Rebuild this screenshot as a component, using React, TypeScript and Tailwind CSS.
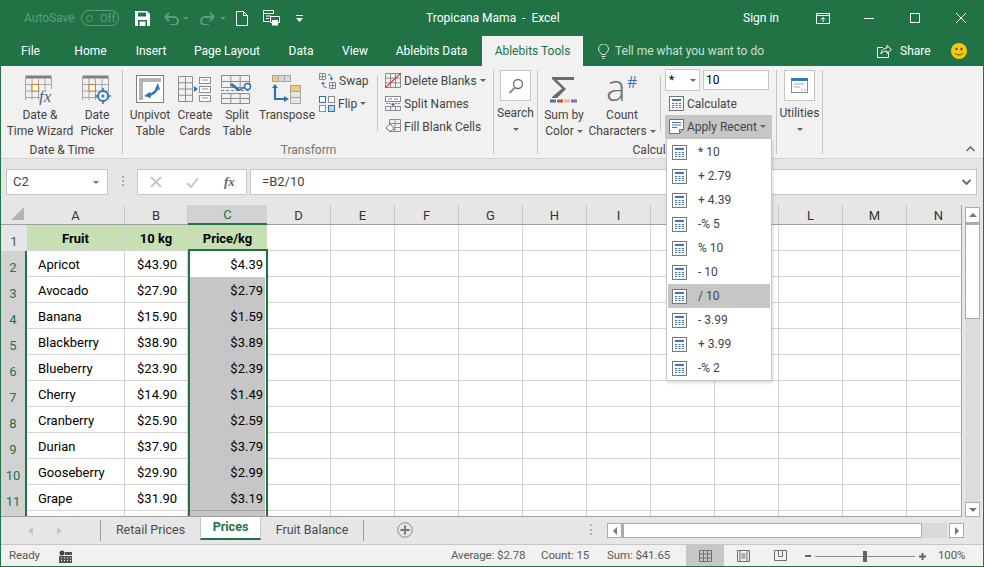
import type { ReactNode } from "react";

const fruits = [
  ["Apricot", "$43.90", "$4.39"],
  ["Avocado", "$27.90", "$2.79"],
  ["Banana", "$15.90", "$1.59"],
  ["Blackberry", "$38.90", "$3.89"],
  ["Blueberry", "$23.90", "$2.39"],
  ["Cherry", "$14.90", "$1.49"],
  ["Cranberry", "$25.90", "$2.59"],
  ["Durian", "$37.90", "$3.79"],
  ["Gooseberry", "$29.90", "$2.99"],
  ["Grape", "$31.90", "$3.19"],
];

const columns = ["D", "E", "F", "G", "H", "I", "J", "K", "L", "M", "N"];
const recent = ["* 10", "+ 2.79", "+ 4.39", "-% 5", "% 10", "- 10", "/ 10", "- 3.99", "+ 3.99", "-% 2"];

const Caret = ({ color = "#666666" }: { color?: string }) => (
  <svg width="6" height="3" viewBox="0 0 6 3" className="inline-block shrink-0">
    <path d="M0 0h6L3 3z" fill={color} />
  </svg>
);

const CalcIcon = () => (
  <svg width="15" height="15" viewBox="0 0 15 15" className="shrink-0">
    <rect x="0.5" y="0.5" width="14" height="14" fill="#fff" stroke="#767676" />
    <rect x="3" y="3" width="9" height="2" fill="#3f74b5" />
    <path d="M3 7h2v1H3zM6.5 7h2v1h-2zM10 7h2v1h-2zM3 9h2v1H3zM6.5 9h2v1h-2zM10 9h2v1h-2zM3 11h2v1H3zM6.5 11h2v1h-2zM10 11h2v1h-2z" fill="#3f74b5" />
  </svg>
);

const CalendarBase = ({ children }: { children: ReactNode }) => (
  <svg width="30" height="30" viewBox="0 0 30 30" className="shrink-0">
    <rect x="0.5" y="0.5" width="26" height="3" fill="#7f7f7f" />
    <path d="M0.5 3v22M7 3v22M13.5 3v22M20 3v22M26.5 3v22M0.5 9.5h26M0.5 16h26M0.5 22.5h26" stroke="#a6a6a6" fill="none" />
    <rect x="7" y="9.5" width="6.5" height="6.5" fill="#fff" stroke="#d67a1e" />
    {children}
  </svg>
);

const TableLines = ({ x, y, w, h, cols, rows }: { x: number; y: number; w: number; h: number; cols: number; rows: number }) => {
  const parts: string[] = [];
  for (let i = 0; i <= cols; i++) parts.push(`M${x + (i * w) / cols} ${y}v${h}`);
  for (let i = 0; i <= rows; i++) parts.push(`M${x} ${y + (i * h) / rows}h${w}`);
  return <path d={parts.join("")} stroke="#8c8c8c" fill="none" />;
};

const UnpivotIcon = () => (
  <svg width="29" height="29" viewBox="0 0 29 29" className="shrink-0">
    <rect x="0.5" y="0.5" width="27" height="27" fill="#fff" stroke="#7f7f7f" />
    <path d="M3 3h22v4H7v18H3z" fill="#b3b3b3" />
    <path d="M11 20c5 0 9-3 11-8" stroke="#2f75b5" strokeWidth="2.5" fill="none" />
    <path d="M19 14l3-6 2 7zM14 17l-6 4 7 2z" fill="#2f75b5" />
  </svg>
);

const CardsIcon = () => (
  <svg width="34" height="27" viewBox="0 0 34 27" className="shrink-0">
    <TableLines x={0.5} y={0.5} w={14} h={25} cols={2} rows={4} />
    <path d="M16 10l4 3-4 3z" fill="#2f75b5" />
    <rect x="21.5" y="1.5" width="11" height="6" fill="#fff" stroke="#8c8c8c" />
    <rect x="21.5" y="10.5" width="11" height="6" fill="#fff" stroke="#8c8c8c" />
    <rect x="21.5" y="19.5" width="11" height="6" fill="#fff" stroke="#8c8c8c" />
    <path d="M24 4h6M24 13h6M24 22h6" stroke="#8c8c8c" />
  </svg>
);

const SplitIcon = () => (
  <svg width="33" height="30" viewBox="0 0 33 30" className="shrink-0">
    <TableLines x={0.5} y={0.5} w={28} h={12} cols={3} rows={2} />
    <TableLines x={0.5} y={18.5} w={28} h={10} cols={3} rows={2} />
    <path d="M0 15.5h28" stroke="#7f7f7f" strokeDasharray="3 2" />
    <path d="M11 8l9 7-3 1-8-6z" fill="#2f75b5" />
    <circle cx="26.5" cy="11.5" r="3" fill="#fff" stroke="#2f75b5" strokeWidth="1.5" />
    <path d="M18 15l6-3" stroke="#2f75b5" strokeWidth="1.5" />
  </svg>
);

const TransposeIcon = () => (
  <svg width="31" height="30" viewBox="0 0 31 30" className="shrink-0">
    <rect x="0.5" y="0.5" width="6" height="6" fill="#f2c879" stroke="#a6a6a6" />
    <rect x="6.5" y="0.5" width="6" height="6" fill="#d9d9d9" stroke="#a6a6a6" />
    <rect x="12.5" y="0.5" width="6" height="6" fill="#d9d9d9" stroke="#a6a6a6" />
    <rect x="18.5" y="10.5" width="10" height="6" fill="#f2c879" stroke="#a6a6a6" />
    <rect x="18.5" y="16.5" width="10" height="6" fill="#e6e6e6" stroke="#a6a6a6" />
    <rect x="18.5" y="22.5" width="10" height="6" fill="#e6e6e6" stroke="#a6a6a6" />
    <path d="M3 12v12h10" stroke="#2f75b5" strokeWidth="2.2" fill="none" />
    <path d="M0 13l3-4 3 4zM12 21l5 3-5 3z" fill="#2f75b5" />
  </svg>
);

const SwapIcon = () => (
  <svg width="17" height="16" viewBox="0 0 17 16" className="shrink-0">
    <TableLines x={0.5} y={0.5} w={6} h={6} cols={2} rows={2} />
    <TableLines x={10.5} y={9.5} w={6} h={6} cols={2} rows={2} />
    <path d="M9 1.5c2 0 3.5 1 3.5 4M7.5 14.500c-2 0-3.500-1-3.500-4" stroke="#2f75b5" fill="none" />
    <path d="M10.500 5h4L12.500 7.500zM2 11h4L4 8.500z" fill="#2f75b5" />
  </svg>
);

const FlipIcon = () => (
  <svg width="16" height="16" viewBox="0 0 16 16" className="shrink-0">
    <rect x="0.5" y="0.5" width="6" height="6" fill="#fff" stroke="#2f75b5" />
    <rect x="9.500" y="0.500" width="6" height="6" fill="#fff" stroke="#8c8c8c" />
    <rect x="0.5" y="9.500" width="6" height="6" fill="#fff" stroke="#8c8c8c" />
    <rect x="9.500" y="9.500" width="6" height="6" fill="#bdd7ee" stroke="#2f75b5" />
  </svg>
);

const DeleteBlanksIcon = () => (
  <svg width="16" height="15" viewBox="0 0 16 15" className="shrink-0">
    <TableLines x={0.5} y={0.5} w={15} h={14} cols={3} rows={3} />
    <path d="M0 15L16 0" stroke="#d9352a" strokeWidth="1.2" />
  </svg>
);

const SplitNamesIcon = () => (
  <svg width="16" height="15" viewBox="0 0 16 15" className="shrink-0">
    <rect x="0.5" y="0.500" width="15" height="5" fill="#fff" stroke="#8c8c8c" />
    <path d="M3 3h4M9 3h4" stroke="#8c8c8c" />
    <path d="M1 7.500h14" stroke="#8c8c8c" strokeDasharray="2 1" />
    <path d="M6 8h4L8 10.500z" fill="#2f75b5" />
    <TableLines x={0.5} y={10.5} w={15} h={4} cols={3} rows={1} />
  </svg>
);

const FillBlankIcon = () => (
  <svg width="16" height="15" viewBox="0 0 16 15" className="shrink-0">
    <TableLines x={4.5} y={0.5} w={11} h={12} cols={2} rows={3} />
    <path d="M1 9l4-4 4 4-3.500 3.500z" fill="#fff" stroke="#6f6f6f" />
    <path d="M8.500 8.500c1 1.500 1.500 2 1 3.500-1 .5-1.500-1-1-3.500z" fill="#e0812a" />
  </svg>
);

const LargeButton = ({ width, icon, lines, caret }: { width: string; icon: ReactNode; lines: string[]; caret?: boolean }) => (
  <div className={`${width} flex flex-col items-center shrink-0`}>
    <div className="h-[41px] pt-[6px] flex items-center justify-center">{icon}</div>
    {lines.map((line, i) => (
      <div key={line} className="h-[16px] leading-[16px] whitespace-nowrap flex items-center gap-[3px]">
        {line}
        {caret && i === lines.length - 1 && <Caret />}
      </div>
    ))}
  </div>
);

const SmallButton = ({ icon, label, caret }: { icon: ReactNode; label: string; caret?: boolean }) => (
  <div className="h-[23px] flex items-center gap-[3px] whitespace-nowrap">
    {icon}
    <span>{label}</span>
    {caret && <Caret />}
  </div>
);

const BoxButton = ({ width, label, children }: { width: string; label: string; children: ReactNode }) => (
  <div className={`${width} flex flex-col items-center`}>
    <div className="mt-[4px] w-[31px] h-[31px] bg-white border border-[#c6c6c6] flex items-center justify-center">{children}</div>
    <div className="mt-[4px] h-[16px] leading-[16px]">{label}</div>
    <div className="mt-[5px] h-[6px] flex items-center"><Caret /></div>
  </div>
);

const Group = ({ width, label, labelColor = "text-[#444444]", children }: { width: string; label?: string; labelColor?: string; children: ReactNode }) => (
  <div className={`${width} shrink-0 relative flex flex-col`}>
    <div className="h-[77px] flex">{children}</div>
    <div className={`h-[15px] leading-[15px] text-center ${labelColor}`}>{label}</div>
    <div className="absolute right-0 top-[4px] bottom-[4px] w-px bg-[#c6c6c6]" />
  </div>
);

const tabs: [string, string][] = [
  ["File", "w-[59px]"],
  ["Home", "w-[61px]"],
  ["Insert", "w-[60px]"],
  ["Page Layout", "w-[92px]"],
  ["Data", "w-[56px]"],
  ["View", "w-[52px]"],
  ["Ablebits Data", "w-[101px]"],
];

export default function App() {
  return (
    <div className="relative w-[984px] h-[567px] overflow-hidden border-x border-b border-[#217346] bg-[#e6e6e6] font-['Roboto',sans-serif] text-[12px] text-[#444444]">
      {/* title bar */}
      <div className="h-[36px] bg-[#217346] text-white flex items-center">
        <span className="ml-[23px] w-[57px] text-[#5e9c7e]">AutoSave</span>
        <div className="w-[38px] h-[16px] rounded-full border border-[#5e9c7e] flex items-center text-[#5e9c7e] text-[11px]">
          <span className="ml-[4px] w-[7px] h-[7px] rounded-full border border-[#5e9c7e]" />
          <span className="ml-[7px] leading-none">Off</span>
        </div>
        <svg width="15" height="15" viewBox="0 0 15 15" className="ml-[16px]">
          <path d="M0 0h12l3 3v12H0z" fill="#fff" />
          <path d="M3 1.500h8v4H3z" fill="#217346" />
          <path d="M3 9h9v6H3z" fill="#217346" />
          <path d="M4.500 10.500h6V15h-6z" fill="#fff" />
        </svg>
        <svg width="15" height="13" viewBox="0 0 15 13" className="ml-[14px]">
          <path d="M1 5h9a4 4 0 0 1 0 8H6M1 5l4-4M1 5l4 4" stroke="#5e9c7e" strokeWidth="2" fill="none" />
        </svg>
        <span className="ml-[4px] w-[7px] flex"><Caret color="#5e9c7e" /></span>
        <svg width="15" height="13" viewBox="0 0 15 13" className="ml-[10px]">
          <path d="M14 5H5a4 4 0 0 0 0 8h4M14 5l-4-4M14 5l-4 4" stroke="#5e9c7e" strokeWidth="2" fill="none" />
        </svg>
        <span className="ml-[5px] w-[7px] flex"><Caret color="#5e9c7e" /></span>
        <svg width="12" height="15" viewBox="0 0 12 15" className="ml-[9px]">
          <path d="M.500.500h7l4 4v10H.500zM7.500.500v4h4" stroke="#fff" fill="none" />
        </svg>
        <svg width="17" height="16" viewBox="0 0 17 16" className="ml-[15px]">
          <path d="M.500.500h10v3H.500zM.500 3.500v8h6M3 6h5M3 8.500h3" stroke="#fff" fill="none" />
          <path d="M7.500 6.500h9v6h-9z" fill="#217346" stroke="#fff" />
          <path d="M9 10h6v5.500H9z" fill="#fff" />
        </svg>
        <svg width="7" height="7" viewBox="0 0 7 7" className="ml-[16px]">
          <path d="M0 0h7v1H0zM0 3h7L3.500 7z" fill="#fff" />
        </svg>
        <span className="ml-[123px] w-[132px] text-center whitespace-nowrap">Tropicana Mama&nbsp; -&nbsp; Excel</span>
        <span className="ml-[185px] w-[37px] whitespace-nowrap">Sign in</span>
        <svg width="14" height="11" viewBox="0 0 14 11" className="ml-[36px]">
          <path d="M.500.500h13v10H.500zM.500 2.500h13M7 9V4.500M5 6.500l2-2 2 2" stroke="#fff" fill="none" />
        </svg>
        <div className="ml-[34px] w-[10px] h-px bg-white" />
        <div className="ml-[36px] w-[10px] h-[10px] border border-white" />
        <svg width="10" height="10" viewBox="0 0 10 10" className="ml-[36px]">
          <path d="M0 0l10 10M10 0L0 10" stroke="#fff" />
        </svg>
      </div>

      {/* tabs */}
      <div className="h-[30px] bg-[#217346] text-white flex items-stretch">
        {tabs.map(([label, width]) => (
          <div key={label} className={`${width} flex items-center justify-center`}>{label}</div>
        ))}
        <div className="w-[101px] bg-[#f1f1f1] text-[#217346] flex items-center justify-center">Ablebits Tools</div>
        <svg width="11" height="15" viewBox="0 0 11 15" className="ml-[15px] self-center">
          <path d="M3.500 10.500C3 8.500.5 7.500.5 5a5 5 0 0 1 10 0c0 2.500-2.500 3.500-3 5.500zM3.500 12.500h4M4.500 14.500h2" stroke="#d8e8df" fill="none" />
        </svg>
        <span className="ml-[6px] w-[152px] self-center text-[#c7e0d2] whitespace-nowrap">Tell me what you want to do</span>
        <svg width="15" height="14" viewBox="0 0 15 14" className="ml-[110px] self-center">
          <path d="M6 3.500H.5v10h11V9" stroke="#fff" fill="none" />
          <path d="M4 10c0-4 3-6 6-6V1.500l4.500 4-4.500 4V7c-2.500 0-5 1-6 3z" stroke="#fff" fill="none" />
        </svg>
        <span className="ml-[8px] w-[30px] self-center">Share</span>
        <svg width="16" height="16" viewBox="0 0 16 16" className="ml-[21px] self-center">
          <circle cx="8" cy="8" r="8" fill="#f6c90e" />
          <circle cx="5.500" cy="6" r="1.200" fill="#5a4a00" />
          <circle cx="10.500" cy="6" r="1.200" fill="#5a4a00" />
          <path d="M4 10c1 2.500 7 2.500 8 0" stroke="#5a4a00" fill="none" />
        </svg>
      </div>

      {/* ribbon */}
      <div className="h-[93px] bg-[#f1f1f1] border-b border-[#d4d4d4] flex">
        <Group width="w-[122px]" label="Date & Time">
          <LargeButton
            width="w-[78px]"
            lines={["Date &", "Time Wizard"]}
            icon={
              <CalendarBase>
                <rect x="15" y="14" width="15" height="15" fill="#f1f1f1" />
                <text x="14" y="27" fontFamily="Liberation Serif, serif" fontStyle="italic" fontSize="17" fill="#44688f">fx</text>
              </CalendarBase>
            }
          />
          <LargeButton
            width="w-[36px]"
            lines={["Date", "Picker"]}
            icon={
              <CalendarBase>
                <circle cx="21" cy="21" r="5" fill="#f1f1f1" stroke="#2f75b5" strokeWidth="1.800" />
                <circle cx="21" cy="21" r="1.500" fill="#2f75b5" />
                <path d="M21 13v3M21 26v3M13 21h3M26 21h3" stroke="#2f75b5" strokeWidth="1.500" />
              </CalendarBase>
            }
          />
        </Group>

        <Group width="w-[371px]" label="Transform" labelColor="text-[#777777]">
          <div className="w-[5px] shrink-0" />
          <LargeButton width="w-[44px]" lines={["Unpivot", "Table"]} icon={<UnpivotIcon />} />
          <LargeButton width="w-[46px]" lines={["Create", "Cards"]} icon={<CardsIcon />} />
          <LargeButton width="w-[38px]" lines={["Split", "Table"]} icon={<SplitIcon />} />
          <LargeButton width="w-[62px]" lines={["Transpose"]} icon={<TransposeIcon />} />
          <div className="w-[59px] shrink-0 pt-[3px] pl-[1px]">
            <SmallButton icon={<SwapIcon />} label="Swap" />
            <SmallButton icon={<FlipIcon />} label="Flip" caret />
          </div>
          <div className="w-px h-[55px] mt-[10px] bg-[#c6c6c6]" />
          <div className="pl-[7px] pt-[3px]">
            <SmallButton icon={<DeleteBlanksIcon />} label="Delete Blanks" caret />
            <SmallButton icon={<SplitNamesIcon />} label="Split Names" />
            <SmallButton icon={<FillBlankIcon />} label="Fill Blank Cells" />
          </div>
        </Group>

        <Group width="w-[44px]">
          <BoxButton width="w-[43px]" label="Search">
            <svg width="16" height="16" viewBox="0 0 16 16">
              <circle cx="10" cy="6" r="4.500" stroke="#6f6f6f" strokeWidth="1.300" fill="none" />
              <path d="M7 9.500L1.500 15" stroke="#8a8a8a" strokeWidth="2" />
            </svg>
          </BoxButton>
        </Group>

        <Group width="w-[239px]" label="Calculate">
          <LargeButton
            width="w-[52px]"
            caret
            lines={["Sum by", "Color"]}
            icon={
              <svg width="28" height="27" viewBox="0 0 28 27">
                <path d="M2 1h22v3H7l9 9-9 9h18v0H2v-1l10-8.500L2 3z" fill="#6b6b6b" />
                <path d="M0 23.500h6v3H0z" fill="#3f74b5" />
                <path d="M7 23.500h6v3H7z" fill="#c8553d" />
                <path d="M14 23.500h6v3h-6z" fill="#e8c27a" />
                <path d="M21 23.500h6v3h-6z" fill="#8f66b8" />
              </svg>
            }
          />
          <LargeButton
            width="w-[64px]"
            caret
            lines={["Count", "Characters"]}
            icon={
              <svg width="32" height="32" viewBox="0 0 32 32" className="overflow-visible">
                <text x="0" y="27" fontFamily="Open Sans, sans-serif" fontWeight="300" fontSize="37" fill="#6f6f6f">a</text>
                <text x="21" y="14" fontFamily="Open Sans, sans-serif" fontSize="16" fill="#3f74b5">#</text>
              </svg>
            }
          />
          <div className="ml-[6px] w-px h-[55px] mt-[10px] bg-[#c6c6c6]" />
          <div className="ml-[4px] w-[107px]">
            <div className="mt-[3px] mb-px h-[22px] flex gap-[3px] items-stretch">
              <div className="w-[35px] bg-white border border-[#c6c6c6] flex items-center justify-between px-[3px]">
                <span className="text-black">*</span>
                <Caret />
              </div>
              <div className="w-[66px] my-px bg-white border border-[#c6c6c6] flex items-center px-[2px] text-black">10</div>
            </div>
            <div className="h-[23px] pl-[4px] flex items-center gap-[3px]">
              <CalcIcon />
              <span>Calculate</span>
            </div>
            <div className="h-[23px] pl-[4px] bg-[#c6c6c6] flex items-center gap-[3px]">
              <svg width="15" height="15" viewBox="0 0 15 15">
                <path d="M.500.500h14v10l-4 4H.500zM14.500 10.500h-4v4" fill="#fff" stroke="#6f6f6f" />
                <path d="M3 3.500h9M3 6h9M3 8.500h5" stroke="#3f74b5" />
              </svg>
              <span className="whitespace-nowrap">Apply Recent</span>
              <Caret />
            </div>
          </div>
        </Group>

        <Group width="w-[46px]">
          <BoxButton width="w-[45px]" label="Utilities">
            <svg width="17" height="15" viewBox="0 0 17 15">
              <rect x="0.500" y="0.500" width="16" height="14" fill="#fff" stroke="#8c8c8c" />
              <rect x="0" y="0" width="17" height="3" fill="#3f74b5" />
              <path d="M3 6h10M3 9h6M10 12h2M13 12h2" stroke="#a6a6a6" />
            </svg>
          </BoxButton>
        </Group>

        <div className="flex-1 flex items-end justify-end pr-[8px] pb-[6px]">
          <svg width="9" height="6" viewBox="0 0 9 6">
            <path d="M.5 5l4-4 4 4" stroke="#666666" strokeWidth="1.500" fill="none" />
          </svg>
        </div>
      </div>

      {/* formula bar */}
      <div className="h-[46px] pt-[10px] flex items-start text-[13px]">
        <div className="ml-[5px] w-[102px] h-[26px] bg-white border border-[#c6c6c6] flex items-center justify-between pl-[6px] pr-[8px]">
          <span>C2</span>
          <Caret color="#777777" />
        </div>
        <div className="ml-[14px] mt-[7px] w-[2px] h-[10px] border-l-2 border-dotted border-[#aaaaaa]" />
        <div className="ml-[13px] w-[110px] h-[26px] bg-white border border-[#c6c6c6] flex items-center">
          <svg width="12" height="12" viewBox="0 0 12 12" className="ml-[12px]">
            <path d="M1 1l10 10M11 1L1 11" stroke="#c6c6c6" strokeWidth="1.800" />
          </svg>
          <svg width="13" height="11" viewBox="0 0 13 11" className="ml-[24px]">
            <path d="M1 6l4 4 7-9" stroke="#c6c6c6" strokeWidth="2" fill="none" />
          </svg>
          <span className="ml-[25px] font-['Liberation_Serif',serif] italic font-bold text-[#666666]">fx</span>
        </div>
        <div className="ml-[3px] w-[727px] h-[26px] bg-white border border-[#c6c6c6] flex items-center justify-between pl-[11px] pr-[5px]">
          <span>=B2/10</span>
          <svg width="9" height="6" viewBox="0 0 9 6">
            <path d="M.5 1l4 4 4-4" stroke="#666666" strokeWidth="1.800" fill="none" />
          </svg>
        </div>
      </div>

      {/* sheet */}
      <div className="h-[312px] flex">
        <div className="w-[961px] h-[312px] overflow-hidden border-b border-[#9e9e9e] relative">
          <div className="grid grid-cols-[26px_98px_63px_79px_repeat(10,64px)_55px] grid-rows-[20px_repeat(12,26px)] text-[13px] text-black">
            <div className="border-b border-[#9e9e9e] flex items-center justify-center">
              <svg width="13" height="13" viewBox="0 0 13 13" className="ml-[6px] -mt-[2px]">
                <path d="M13 0v13H0z" fill="#b4b4b4" />
              </svg>
            </div>
            <div className="pt-[2px] border-b border-r border-b-[#9e9e9e] border-r-[#c6c6c6] flex items-center justify-center text-[#333333]">A</div>
            <div className="pt-[2px] border-b border-r border-b-[#9e9e9e] border-r-[#c6c6c6] flex items-center justify-center text-[#333333]">B</div>
            <div className="pt-[2px] bg-[#d2d2d2] border-b-2 border-[#217346] flex items-center justify-center text-[#217346]">C</div>
            {columns.map((c) => (
              <div
                key={c}
                className={`pt-[2px] border-b border-b-[#9e9e9e] flex items-center justify-center text-[#333333] ${
                  c === "N" ? "pl-[9px] border-r border-r-[#9e9e9e]" : "border-r border-r-[#c6c6c6]"
                }`}
              >
                {c}
              </div>
            ))}

            <div className="flex items-end justify-center text-[#555555]">1</div>
            <div className="pt-[2px] bg-[#c6e0b4] border-r border-b border-[#d4d4d4] flex items-center justify-center font-bold">Fruit</div>
            <div className="pt-[2px] bg-[#c6e0b4] border-r border-b border-[#d4d4d4] flex items-center justify-center font-bold">10 kg</div>
            <div className="pt-[2px] bg-[#c6e0b4] border-b border-[#d4d4d4] flex items-center justify-center font-bold">Price/kg</div>
            {columns.map((c) => (
              <div key={c} className={`bg-white border-b border-[#d4d4d4] ${c === "N" ? "border-r border-r-[#9e9e9e]" : "border-r"}`} />
            ))}

            {[...fruits, ["", "", ""]].map((row, i) => (
              <div key={i} className="contents">
                <div className="bg-[#d2d2d2] border-r-2 border-[#217346] flex items-end justify-center text-[#217346]">{i < 10 ? i + 2 : ""}</div>
                <div className="pt-[2px] bg-white border-r border-b border-[#d4d4d4] flex items-center pl-[11px]">{row[0]}</div>
                <div className="pt-[2px] bg-white border-r border-b border-[#d4d4d4] flex items-center justify-end pr-[10px]">{row[1]}</div>
                <div
                  className={`pt-[2px] flex items-center justify-end pr-[2px] border-r-2 border-r-white ${i === 0 ? "bg-white" : "bg-[#c6c6c6]"} ${
                    i === 9 ? "border-b border-b-[#a6a6a6]" : ""
                  }`}
                >
                  {row[2]}
                </div>
                {columns.map((c) => (
                  <div key={c} className={`bg-white border-b border-[#d4d4d4] ${c === "N" ? "border-r border-r-[#9e9e9e]" : "border-r"}`} />
                ))}
              </div>
            ))}
          </div>
          {/* selection frame */}
          <div className="absolute left-[187px] top-[44px] w-[80px] h-[300px] border-2 border-[#217346] pointer-events-none" />
        </div>

        <div className="flex-1 flex flex-col pl-[3px] pt-[2px] pr-[3px]">
          <div className="w-[15px] h-[16px] bg-white border border-[#ababab] flex items-center justify-center">
            <svg width="8" height="4" viewBox="0 0 8 4"><path d="M0 4h8L4 0z" fill="#777777" /></svg>
          </div>
          <div className="w-[15px] h-[96px] bg-white border border-[#ababab] border-t-2" />
          <div className="w-[15px] flex-1 bg-[#dcdcdc]" />
          <div className="w-[15px] h-[15px] bg-white border border-[#ababab] flex items-center justify-center">
            <svg width="8" height="4" viewBox="0 0 8 4"><path d="M0 0h8L4 4z" fill="#777777" /></svg>
          </div>
        </div>
      </div>

      {/* sheet tabs */}
      <div className="h-[27px] flex items-start text-[12.5px]">
        <div className="w-[100px] h-[21px] mt-[3px] border-r border-[#9e9e9e] flex items-center">
          <svg width="5" height="8" viewBox="0 0 5 8" className="ml-[27px]"><path d="M5 0v8L0 4z" fill="#c6c6c6" /></svg>
          <svg width="5" height="8" viewBox="0 0 5 8" className="ml-[24px]"><path d="M0 0v8l5-4z" fill="#c6c6c6" /></svg>
        </div>
        <div className="w-[99px] h-[26px] flex items-center justify-center text-[#4a4a4a]">Retail Prices</div>
        <div className="w-[61px] h-[24px] -mt-px bg-white border-x border-x-[#c6c6c6] border-b-2 border-b-[#217346] flex items-center justify-center font-bold text-[#217346]">Prices</div>
        <div className="w-[103px] h-[21px] mt-[3px] border-r border-[#9e9e9e] flex items-center justify-center text-[#4a4a4a]">Fruit Balance</div>
        <svg width="16" height="16" viewBox="0 0 16 16" className="ml-[33px] mt-[5px]">
          <circle cx="8" cy="8" r="7.300" fill="none" stroke="#8c8c8c" />
          <path d="M8 3.500v9M3.500 8h9" stroke="#777777" strokeWidth="1.800" />
        </svg>
        <div className="ml-[177px] mt-[7px] w-[2px] h-[11px] border-l-2 border-dotted border-[#b4b4b4]" />
        <div className="ml-[15px] mt-[6px] flex h-[15px]">
          <div className="w-[15px] bg-white border border-[#ababab] flex items-center justify-center">
            <svg width="4" height="8" viewBox="0 0 4 8"><path d="M4 0v8L0 4z" fill="#777777" /></svg>
          </div>
          <div className="w-[300px] bg-white border border-[#ababab] border-l-2" />
          <div className="w-[25px] bg-[#d9d9d9]" />
          <div className="ml-[2px] w-[15px] bg-white border border-[#ababab] flex items-center justify-center">
            <svg width="4" height="8" viewBox="0 0 4 8"><path d="M0 0v8l4-4z" fill="#777777" /></svg>
          </div>
        </div>
      </div>

      {/* status bar */}
      <div className="h-[23px] bg-[#f1f1f1] border-t border-[#c6c6c6] flex items-stretch text-[11.5px] tracking-[-0.1px] text-[#595959]">
        <span className="ml-[8px] w-[42px] self-center">Ready</span>
        <svg width="13" height="13" viewBox="0 0 13 13" className="ml-[8px] self-center">
          <circle cx="3" cy="3" r="2.500" fill="#444444" />
          <path d="M0 6h13v7H0zM6 2h7v3H6z" fill="#555555" />
          <path d="M2 8h1M5 8h1M8 8h1M11 8h1M2 10.500h1M5 10.500h1M8 10.500h1M11 10.500h1" stroke="#fff" />
        </svg>
        <span className="ml-[379px] w-[74px] self-center whitespace-nowrap">Average: $2.78</span>
        <span className="ml-[16px] w-[50px] self-center whitespace-nowrap">Count: 15</span>
        <span className="ml-[16px] w-[60px] self-center whitespace-nowrap">Sum: $41.65</span>
        <div className="ml-[19px] w-[38px] bg-[#c6c6c6] flex items-center justify-center">
          <svg width="13" height="12" viewBox="0 0 13 12">
            <path d="M.500.500h12v11H.500zM4.500.500v11M8.500.500v11M.500 4h12M.500 8h12" stroke="#6f6f6f" fill="none" />
          </svg>
        </div>
        <div className="w-[38px] flex items-center justify-center">
          <svg width="13" height="12" viewBox="0 0 13 12">
            <path d="M.500.500h12v11H.500zM3 .500v11M10 .500v11M4.500 4h4M4.500 6h4M4.500 8h4" stroke="#6f6f6f" fill="none" />
          </svg>
        </div>
        <div className="w-[36px] flex items-center justify-center">
          <svg width="13" height="12" viewBox="0 0 13 12">
            <path d="M.500.500h12v10H.500zM4.500.500v6h4v-6" stroke="#6f6f6f" fill="none" />
          </svg>
        </div>
        <div className="ml-[7px] flex items-center">
          <div className="w-[6px] h-[2px] bg-[#666666]" />
          <div className="ml-[4px] w-[100px] h-px bg-[#8c8c8c] flex items-center justify-center">
            <div className="w-[4px] h-[11px] bg-[#666666]" />
          </div>
          <svg width="7" height="7" viewBox="0 0 7 7" className="ml-[4px]"><path d="M2.500 0h2v2.500H7v2H4.500V7h-2V4.500H0v-2h2.500z" fill="#666666" /></svg>
          <span className="ml-[12px]">100%</span>
        </div>
      </div>

      {/* apply recent menu */}
      <div className="absolute left-[665px] top-[138px] w-[106px] h-[243px] bg-white border border-[#c6c6c6] shadow-[1px_2px_3px_rgba(0,0,0,0.15)] py-[1px] px-px">
        {recent.map((item, i) => (
          <div key={i} className={`h-[24px] flex items-center pl-[4px] ${i === 6 ? "bg-[#c6c6c6]" : ""}`}>
            <CalcIcon />
            <span className="ml-[11px]">{item}</span>
          </div>
        ))}
      </div>
    </div>
  );
}
